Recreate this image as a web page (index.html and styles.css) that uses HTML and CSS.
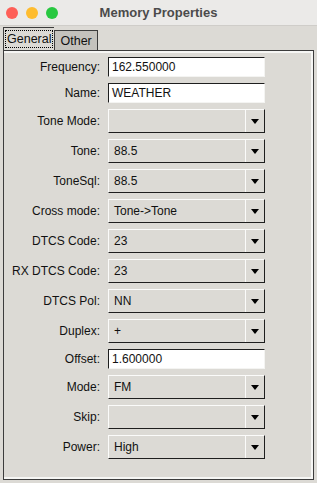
FILE: index.html
```html
<!DOCTYPE html>
<html lang="en">

<head>
    <meta charset="utf-8">
    <title>Memory Properties</title>
    <link rel="stylesheet" href="styles.css">
</head>

<body>

    <div class="titlebar">
        <div class="lights">
            <span class="light red"></span>
            <span class="light yellow"></span>
            <span class="light green"></span>
        </div>
        <div class="title">Memory Properties</div>
        <div></div>
    </div>

    <div class="tabs">
        <div class="tab valgt"><span class="fokus">General</span></div>
        <div class="tab">Other</div>
    </div>

    <section class="panel">
        <div class="row">
            <div class="lbl">Frequency:</div>
            <div class="entry">162.550000</div>
        </div>
        <div class="row">
            <div class="lbl">Name:</div>
            <div class="entry">WEATHER</div>
        </div>
        <div class="row">
            <div class="lbl">Tone Mode:</div>
            <div class="combo"><span class="val"></span><span class="pil"></span></div>
        </div>
        <div class="row">
            <div class="lbl">Tone:</div>
            <div class="combo"><span class="val">88.5</span><span class="pil"></span></div>
        </div>
        <div class="row">
            <div class="lbl">ToneSql:</div>
            <div class="combo"><span class="val">88.5</span><span class="pil"></span></div>
        </div>
        <div class="row">
            <div class="lbl">Cross mode:</div>
            <div class="combo"><span class="val">Tone-&gt;Tone</span><span class="pil"></span></div>
        </div>
        <div class="row">
            <div class="lbl">DTCS Code:</div>
            <div class="combo"><span class="val">23</span><span class="pil"></span></div>
        </div>
        <div class="row">
            <div class="lbl">RX DTCS Code:</div>
            <div class="combo"><span class="val">23</span><span class="pil"></span></div>
        </div>
        <div class="row">
            <div class="lbl">DTCS Pol:</div>
            <div class="combo"><span class="val">NN</span><span class="pil"></span></div>
        </div>
        <div class="row">
            <div class="lbl">Duplex:</div>
            <div class="combo"><span class="val">+</span><span class="pil"></span></div>
        </div>
        <div class="row">
            <div class="lbl">Offset:</div>
            <div class="entry">1.600000</div>
        </div>
        <div class="row">
            <div class="lbl">Mode:</div>
            <div class="combo"><span class="val">FM</span><span class="pil"></span></div>
        </div>
        <div class="row">
            <div class="lbl">Skip:</div>
            <div class="combo"><span class="val"></span><span class="pil"></span></div>
        </div>
        <div class="row">
            <div class="lbl">Power:</div>
            <div class="combo"><span class="val">High</span><span class="pil"></span></div>
        </div>
    </section>

</body>

</html>
```

FILE: styles.css
```css
body {
    margin: 0;
    width: 317px;
    height: 483px;
    overflow: hidden;
    background-color: #dcdad5;
    font-family: "Liberation Sans", Arial, sans-serif;
    font-size: 12px;
    color: #111;
}

/* vinduets titellinje */
.titlebar {
    height: 25px;
    display: grid;
    grid-template-columns: 1fr auto 1fr;
    align-items: center;
    background-color: #ebeae8;
    border-bottom: 1px solid #cfcdc9;
}

.lights {
    display: flex;
    gap: 8px;
    padding-left: 6px;
}

.light {
    width: 12px;
    height: 12px;
    border-radius: 50%;
}

.red {
    background-color: #fe5f57;
}

.yellow {
    background-color: #febc2e;
}

.green {
    background-color: #28c840;
}

.title {
    font-size: 13px;
    font-weight: bold;
    color: #4b4b4b;
}

/* faner */
.tabs {
    height: 24px;
    display: flex;
    align-items: flex-end;
    padding-left: 3px;
}

.tab {
    box-sizing: border-box;
    height: 20px;
    padding: 0 5px;
    display: flex;
    align-items: center;
    background-color: #c4c2bd;
    border: 1px solid #3c3c3c;
    border-bottom: none;
    font-size: 12.5px;
}

.tab.valgt {
    height: 23px;
    padding: 0 1px;
    background-color: #dcdad5;
    border-right: none;
}

.fokus {
    padding: 1px 1px;
    border: 1px dotted #000;
}

/* panelet */
.panel {
    box-sizing: border-box;
    height: 430px;
    margin: 0 3px;
    padding-top: 6px;
    display: flex;
    flex-direction: column;
    gap: 6px;
    border: 1px solid #3c3c3c;
    box-shadow: inset -2px -2px 0 #f6f6f4, inset 0 2px 0 #f6f6f4;
}

.row {
    display: grid;
    grid-template-columns: 96px 157px;
    column-gap: 8px;
    align-items: center;
}

.lbl {
    text-align: right;
}

.entry {
    box-sizing: border-box;
    height: 20px;
    padding-left: 3px;
    line-height: 18px;
    background-color: white;
    border: 1px solid;
    border-color: #1e1e1e #f4f4f2 #f4f4f2 #1e1e1e;
}

.combo {
    box-sizing: border-box;
    height: 24px;
    display: flex;
    border: 1px solid;
    border-color: #fbfbfa #1e1e1e #1e1e1e #fbfbfa;
}

.val {
    flex: 1;
    padding-left: 5px;
    line-height: 22px;
}

.pil {
    width: 18px;
    display: flex;
    align-items: center;
    justify-content: center;
    border-left: 1px solid #fbfbfa;
}

.pil::after {
    content: "";
    border-left: 4px solid transparent;
    border-right: 4px solid transparent;
    border-top: 5px solid #000;
}
```
